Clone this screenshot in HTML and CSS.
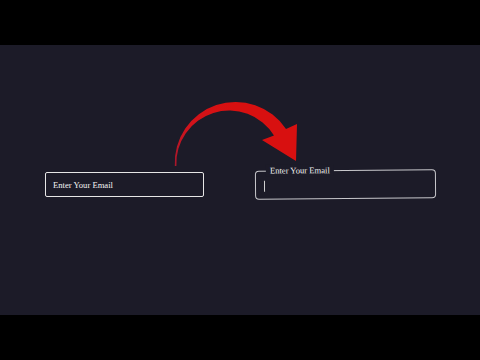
FILE: index.html
```html
<!DOCTYPE html>
<html>
<head>
<meta charset="utf-8">
<link rel="stylesheet" href="styles.css">
</head>
<body>
<div class="stage">
  <div class="row">
    <div class="input plain">
      <span class="placeholder">Enter Your Email</span>
    </div>
    <div class="input floated">
      <span class="label">Enter Your Email</span>
      <span class="caret"></span>
    </div>
  </div>
  <svg class="arrow" viewBox="0 45 480 270" width="480" height="270">
    <defs>
      <linearGradient id="g" x1="175" y1="166" x2="230" y2="104" gradientUnits="userSpaceOnUse">
        <stop offset="0" stop-color="#a8172c"/>
        <stop offset="0.45" stop-color="#d0131c"/>
        <stop offset="1" stop-color="#d81010"/>
      </linearGradient>
    </defs>
    <path fill="url(#g)" d="M174.8 166 A60.77 60.77 0 0 1 286 129 L297 124 L296 161 L262 140 L274 135.5 A52.8 52.8 0 0 0 176.4 166 Z"/>
  </svg>
</div>
</body>
</html>
```
FILE: styles.css
```css
html, body {
  margin: 0;
  padding: 0;
  background: #000;
}
body {
  width: 480px;
  height: 360px;
  padding-top: 45px;
  box-sizing: border-box;
  font-family: "Liberation Serif", "Times New Roman", serif;
}
.stage {
  position: relative;
  width: 480px;
  height: 270px;
  background: #1c1b28;
}
.row {
  display: flex;
  align-items: center;
  gap: 50px;
  padding: 125px 0 0 45px;
  height: 29px;
}
.input {
  box-sizing: border-box;
  position: relative;
  color: #f4f4f4;
  font-size: 8.6px;
}
.plain {
  width: 159px;
  height: 25px;
  border: 1px solid #e6e6e6;
  border-radius: 2px;
  display: flex;
  align-items: center;
  padding-left: 7px;
}
.floated {
  width: 181px;
  height: 29px;
  border: 1px solid #c8c8cc;
  border-radius: 4px;
  transform: rotate(-0.47deg);
  margin-left: 0.5px;
  display: flex;
  align-items: center;
  padding-left: 8px;
}
.label {
  position: absolute;
  left: 10px;
  top: -7px;
  padding: 0 4px;
  line-height: 12px;
  background: #1c1b28;
}
.caret {
  width: 1px;
  height: 11px;
  background: #d0d0d0;
  margin-top: 1px;
}
.arrow {
  position: absolute;
  left: 0;
  top: 0;
}
```
